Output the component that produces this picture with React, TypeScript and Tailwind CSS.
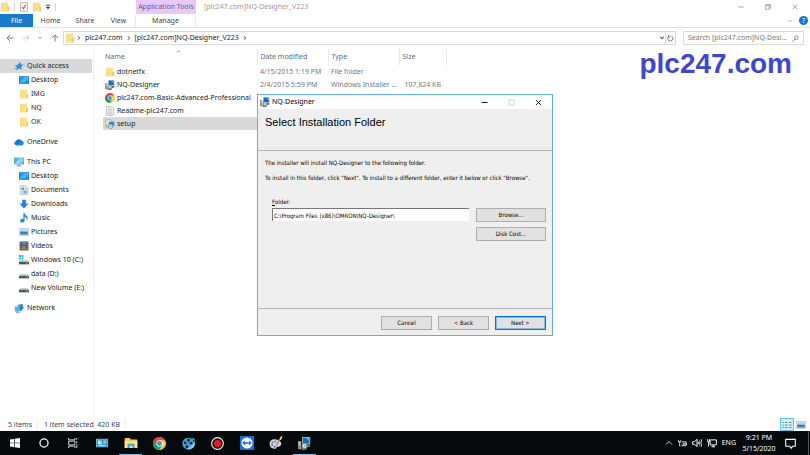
import type { ReactNode } from 'react'

type IconProps = { className?: string }

function Folder({ className = 'h-2.5 w-2.5' }: IconProps) {
  return (
    <svg viewBox="0 0 16 16" className={className} aria-hidden="true">
      <path d="M2 1h11v12l-1 2H2z" fill="#fbe08a" />
      <path d="M12 8h2.500v7H12z" fill="#f0c75a" />
      <path d="M2 1h1.500v14H2z" fill="#f8d676" />
    </svg>
  )
}

function Screen({ className = 'h-2.5 w-2.5' }: IconProps) {
  return (
    <svg viewBox="0 0 16 16" className={className} aria-hidden="true">
      <path d="M0 2h16v12H0z" fill="#1274c9" />
      <path d="M1 3h14v9H1z" fill="#1e9df0" />
      <path d="M1 12L10 3h5v3l-6 6z" fill="#49b6fa" />
    </svg>
  )
}

function Computer() {
  return (
    <svg viewBox="0 0 16 16" className="h-2.5 w-2.5" aria-hidden="true">
      <path d="M0 1h16v11H0z" fill="#7d97a8" />
      <path d="M1 2h14v9H1z" fill="#45b8f2" />
      <path d="M1 11l8-9h6v4l-5 5z" fill="#8bd8fb" />
      <path d="M6 12h4v2h2v1H4v-1h2z" fill="#8b9aa4" />
    </svg>
  )
}

function Star() {
  return (
    <svg viewBox="0 0 16 16" className="h-2.5 w-2.5" aria-hidden="true">
      <path d="M10 1l1 4.500 4.500.5-4 3 1.500 5-4.500-2.500L3 15l2-5L1 7l5-1z" fill="#2f8fdd" />
      <path d="M4 10l-3.500 4" stroke="#5aa8e8" strokeWidth="1.500" />
    </svg>
  )
}

function Cloud() {
  return (
    <svg viewBox="0 0 16 16" className="h-2.5 w-2.5" aria-hidden="true">
      <path d="M3.500 13a3.200 3.200 0 01-.5-6.300A5 5 0 0112 6a3.600 3.600 0 011 7z" fill="#0f74cf" />
      <path d="M3 13l8-6 4 2.500a3 3 0 01-2 3.500z" fill="#1490df" />
    </svg>
  )
}

function Page({ className = 'h-2.5 w-2.5' }: IconProps) {
  return (
    <svg viewBox="0 0 16 16" className={className} aria-hidden="true">
      <path d="M2.500 1h8l3 3v11h-11z" fill="#f0f1f2" stroke="#a4a8ab" />
      <path d="M5 5h6M5 7.500h6M5 10h6M5 12.500h6" stroke="#aab0b4" />
    </svg>
  )
}

function Documents() {
  return (
    <svg viewBox="0 0 16 16" className="h-2.5 w-2.5" aria-hidden="true">
      <path d="M2 1h9l3 3v11H2z" fill="#e8eff4" stroke="#97a6b0" />
      <path d="M4 4h4v4H4z" fill="#4ba2dd" />
      <path d="M9 6h3M5 10h7M5 12.500h7" stroke="#6d8ba1" />
      <path d="M8 9h4v4H8z" fill="#73a8ce" />
    </svg>
  )
}

function Download() {
  return (
    <svg viewBox="0 0 16 16" className="h-2.5 w-2.5" aria-hidden="true">
      <path d="M5 1h6v6h4.500L8 15 .5 7H5z" fill="#2b83d6" />
    </svg>
  )
}

function Music() {
  return (
    <svg viewBox="0 0 16 16" className="h-2.5 w-2.5" aria-hidden="true">
      <path d="M7 0h2c0 4 5 4 5 8 0 2-1 3-2 4 1-3 0-5-3-6v6a3.500 3 0 11-2-2.500z" fill="#1e90e0" />
    </svg>
  )
}

function Pictures({ className = 'h-2.5 w-2.5' }: IconProps) {
  return (
    <svg viewBox="0 0 16 16" className={className} aria-hidden="true">
      <path d="M.5 2.500h15v11H.5z" fill="#f5f8fa" stroke="#a0adb6" />
      <path d="M2 4h12v8H2z" fill="#a8d5ef" />
      <path d="M2 8c4-2 7 1 12-1v5H2z" fill="#3d7fae" />
    </svg>
  )
}

function Videos() {
  return (
    <svg viewBox="0 0 16 16" className="h-2.5 w-2.5" aria-hidden="true">
      <path d="M1 1h14v14H1z" fill="#3c3f48" />
      <path d="M4 1h8v6H4z" fill="#5f83b5" />
      <path d="M4 8h8v7H4z" fill="#a3794c" />
      <path d="M2.500 2v13M13.500 2v13" stroke="#d8d8d8" strokeDasharray="1.500 1.500" />
    </svg>
  )
}

function Drive({ system = false }: { system?: boolean }) {
  return (
    <svg viewBox="0 0 16 16" className="h-2.5 w-2.5" aria-hidden="true">
      {system && <path d="M0 0h3v3H0zM4 0h3v3H4zM0 4h3v3H0zM4 4h3v3H4z" fill="#22aee8" />}
      <path d="M2 8h12l2 3H0z" fill="#c6cacc" />
      <path d="M0 11h16v4H0z" fill="#4f5659" />
      <path d="M11 13h3" stroke="#63db73" strokeWidth="1.500" />
    </svg>
  )
}

function Network() {
  return (
    <svg viewBox="0 0 16 16" className="h-2.5 w-2.5" aria-hidden="true">
      <path d="M5 3l9-2 1.500 8-5 3z" fill="#4c9ed0" />
      <path d="M1 6l9-1v8l-8 1z" fill="#4bb3ef" />
      <path d="M3 14h7v1.500H3z" fill="#6a94ae" />
      <path d="M10 5l3-2v8l-3 2z" fill="#2677ae" />
    </svg>
  )
}

function Installer({ className = 'h-2.5 w-2.5' }: IconProps) {
  return (
    <svg viewBox="0 0 16 16" className={className} aria-hidden="true">
      <path d="M5 0h10v9H5z" fill="#b8c3ca" />
      <path d="M6 1h8v7H6z" fill="#1269b8" />
      <path d="M9 1l5 4V1z" fill="#57b5ea" />
      <path d="M0 5h4v10H0z" fill="#8b9295" />
      <path d="M1 7h2M1 9h2" stroke="#fff" />
      <path d="M5 9h10v3l-4 1-1 3H4z" fill="#68716f" />
      <circle cx="8" cy="11" r="3.200" fill="#e3e8e8" stroke="#596769" />
      <circle cx="8" cy="11" r="1" fill="#478b78" />
    </svg>
  )
}

function Setup() {
  return (
    <svg viewBox="0 0 16 16" className="h-2.5 w-2.5" aria-hidden="true">
      <path d="M1 1h8l3 3v9H1z" fill="#dce8f0" stroke="#8b9faf" />
      <path d="M6 4h9v8H6z" fill="#8298a5" />
      <path d="M7 5h7v5H7z" fill="#3389d0" />
      <path d="M3 8l4 3-3 3-3-3z" fill="#e9bd3e" />
      <circle cx="9" cy="12" r="3.500" fill="#dce9ec" stroke="#587f9d" />
      <circle cx="9" cy="12" r="1" fill="#327bbc" />
    </svg>
  )
}

function Chrome({ className = 'h-2.5 w-2.5' }: IconProps) {
  return (
    <svg viewBox="0 0 24 24" className={className} aria-hidden="true">
      <circle cx="12" cy="12" r="12" fill="#ffcd42" />
      <path d="M1.600 6A12 12 0 0012 24l5-9-5-3z" fill="#17a15f" />
      <path d="M1.600 6L7 15l5-9h10.400A12 12 0 001.600 6z" fill="#e34435" />
      <circle cx="12" cy="12" r="5.800" fill="#fff" />
      <circle cx="12" cy="12" r="4.600" fill="#4a8af4" />
    </svg>
  )
}

function Line({ d, className = 'h-2 w-2', width = 1.5 }: { d: string; className?: string; width?: number }) {
  return (
    <svg viewBox="0 0 16 16" className={className} fill="none" stroke="currentColor" strokeWidth={width} aria-hidden="true">
      <path d={d} />
    </svg>
  )
}

const CHEVRON_RIGHT = 'M5 3l5 5-5 5'
const CHEVRON_DOWN = 'M3 5l5 5 5-5'
const CHEVRON_UP = 'M2 11l6-6 6 6'
const CLOSE = 'M2 2l12 12M14 2L2 14'

type TreeItem = { label: string; icon: ReactNode }

const tree: { root: TreeItem; selected?: boolean; children: TreeItem[] }[] = [
  {
    root: { label: 'Quick access', icon: <Star /> },
    selected: true,
    children: [
      { label: 'Desktop', icon: <Screen /> },
      { label: 'IMG', icon: <Folder /> },
      { label: 'NQ', icon: <Folder /> },
      { label: 'OK', icon: <Folder /> },
    ],
  },
  { root: { label: 'OneDrive', icon: <Cloud /> }, children: [] },
  {
    root: { label: 'This PC', icon: <Computer /> },
    children: [
      { label: 'Desktop', icon: <Screen /> },
      { label: 'Documents', icon: <Documents /> },
      { label: 'Downloads', icon: <Download /> },
      { label: 'Music', icon: <Music /> },
      { label: 'Pictures', icon: <Pictures /> },
      { label: 'Videos', icon: <Videos /> },
      { label: 'Windows 10 (C:)', icon: <Drive system /> },
      { label: 'data (D:)', icon: <Drive /> },
      { label: 'New Volume (E:)', icon: <Drive /> },
    ],
  },
  { root: { label: 'Network', icon: <Network /> }, children: [] },
]

const files = [
  { name: 'dotnetfx', icon: <Folder />, date: '4/15/2015 1:19 PM', type: 'File folder', size: '' },
  { name: 'NQ-Designer', icon: <Installer />, date: '2/4/2015 5:59 PM', type: 'Windows Installer ...', size: '107,824 KB' },
  { name: 'plc247.com-Basic-Advanced-Professional', icon: <Chrome />, date: '', type: '', size: '' },
  { name: 'Readme-plc247.com', icon: <Page />, date: '', type: '', size: '' },
  { name: 'setup', icon: <Setup />, date: '', type: '', size: '', selected: true },
]

function TitleBar() {
  return (
    <header className="flex h-3.5 items-center justify-between">
      <div className="flex h-full items-center">
        <div className="flex w-34 items-center gap-[3px]">
          <Folder />
          <span className="mx-px h-2 w-px bg-gray-300" />
          <button aria-label="Properties">
            <svg viewBox="0 0 16 16" className="h-2.5 w-2.5" aria-hidden="true">
              <path d="M2.500 1h11v14h-11z" fill="#fff" stroke="#8b8b8b" />
              <path d="M5 8l2 3 4-7" fill="none" stroke="#e4572e" strokeWidth="2" />
            </svg>
          </button>
          <button aria-label="New folder"><Folder /></button>
          <button aria-label="Customize toolbar">
            <svg viewBox="0 0 8 8" className="h-1.5 w-1.5" aria-hidden="true">
              <path d="M1 1h6v1H1zM1 3.500h6L4 7z" fill="#333" />
            </svg>
          </button>
          <span className="mx-px h-2 w-px bg-gray-300" />
        </div>
        <div className="flex h-full w-15 items-center justify-center bg-[#e9c9fc] text-[#6b5679]">Application Tools</div>
        <h1 className="ml-2 text-[#999]">[plc247.com]NQ-Designer_V223</h1>
      </div>
      <div className="flex items-center gap-[21px] pr-3 text-[#8d8d8d]">
        <button aria-label="Minimize"><Line d="M1 8h14" className="h-1.5 w-1.5" width={2} /></button>
        <button aria-label="Restore"><Line d="M1 4h10v10H1zM4 4V1h11v10h-4" className="h-1.5 w-1.5" width={2} /></button>
        <button aria-label="Close"><Line d={CLOSE} className="h-1.5 w-1.5" width={2} /></button>
      </div>
    </header>
  )
}

function Ribbon() {
  return (
    <nav className="flex items-stretch justify-between border-b border-[#e2e2e2] text-[#444]">
      <div className="flex h-[13px] text-center">
        <button className="w-[33px] bg-[#1979ca] text-white">File</button>
        <button className="w-[35px]">Home</button>
        <button className="w-[34px]">Share</button>
        <button className="w-[33px]">View</button>
        <button className="w-[61px] border-x border-[#eee6f3]">Manage</button>
      </div>
      <div className="flex items-center gap-1.5 pr-0.5 text-[#999]">
        <button aria-label="Expand ribbon"><Line d={CHEVRON_DOWN} className="h-1.5 w-1.5" width={2} /></button>
        <button aria-label="Help" className="flex h-[9px] w-[9px] items-center justify-center rounded-full bg-[#0b78d4] text-white">?</button>
      </div>
    </nav>
  )
}

function AddressBar() {
  return (
    <div className="flex items-center px-1.5 py-[3px]">
      <div className="flex w-[57px] items-center justify-between pr-1 text-[#777]">
        <button aria-label="Back"><Line d="M15 8H2M8 2L2 8l6 6" width={2} /></button>
        <button aria-label="Forward" className="text-[#d0d0d0]"><Line d="M1 8h13M8 2l6 6-6 6" width={2} /></button>
        <button aria-label="Recent locations"><Line d={CHEVRON_DOWN} className="h-1.5 w-1.5" width={2} /></button>
        <button aria-label="Up"><Line d="M8 15V2M2 8l6-6 6 6" width={2} /></button>
      </div>
      <div className="flex h-3.5 grow items-center border border-[#d9d9d9] pl-px">
        <Folder />
        <div className="ml-px flex grow items-center gap-[3px] text-[#222]">
          <Line d={CHEVRON_RIGHT} className="h-1.5 w-1.5" width={2} />
          <a href="#plc247">plc247.com</a>
          <Line d={CHEVRON_RIGHT} className="h-1.5 w-1.5" width={2} />
          <a href="#designer">[plc247.com]NQ-Designer_V223</a>
          <Line d={CHEVRON_RIGHT} className="h-1.5 w-1.5" width={2} />
        </div>
        <button aria-label="Previous locations" className="text-[#666]"><Line d={CHEVRON_DOWN} className="h-1.5 w-1.5" width={3} /></button>
        <button aria-label="Refresh" className="flex h-full items-center border-l border-[#d9d9d9] px-px text-[#666]">
          <Line d="M4 3a6 6 0 107 0M4 0v4h4" className="h-[7px] w-[7px]" width={2} />
        </button>
      </div>
      <label className="ml-[7px] flex h-3.5 w-[121px] items-center border border-[#d9d9d9] px-1 text-[#777]">
        <input aria-label="Search" placeholder="Search [plc247.com]NQ-Desi..." className="w-full min-w-0 outline-none placeholder:text-[#777]" />
        <Line d="M1 15l6-6M6 6a4 4 0 108 0 4 4 0 10-8 0" className="h-[7px] w-[7px] shrink-0" width={2} />
      </label>
    </div>
  )
}

function TreeRow({ item, nested, selected }: { item: TreeItem; nested?: boolean; selected?: boolean }) {
  return (
    <a
      href="#folder"
      className={`flex h-3.5 items-center text-[#222] ${nested ? 'gap-0.5 pl-[19px]' : 'gap-[3px] pl-3.5'} ${selected ? 'bg-[#d9d9d9]' : ''}`}
    >
      {item.icon}
      {item.label}
    </a>
  )
}

function Sidebar() {
  return (
    <aside className="flex w-[94px] shrink-0 flex-col gap-1.5 border-r border-[#f0f0f0] pt-[11px] pr-px">
      {tree.map((group) => (
        <div key={group.root.label}>
          <TreeRow item={group.root} selected={group.selected} />
          {group.children.map((c) => <TreeRow key={c.label} item={c} nested />)}
        </div>
      ))}
    </aside>
  )
}

function FileTable() {
  return (
    <table className="mt-px ml-[9px] table-fixed self-start text-left">
      <thead>
        <tr className="h-4 text-[#5c6b82] [&>th]:border-r [&>th]:border-[#e8e8e8] [&>th]:font-normal">
          <th className="relative w-[154px] pl-0.5">
            Name
            <Line d={CHEVRON_UP} className="absolute top-0 left-[73px] h-[5px] w-[5px]" width={2} />
          </th>
          <th className="w-[71px] pl-[3px]">Date modified</th>
          <th className="w-[71px] pl-[3px]">Type</th>
          <th className="w-[47px] pl-[3px]">Size</th>
        </tr>
      </thead>
      <tbody>
        {files.map((f) => (
          <tr key={f.name} className={`h-[13px] whitespace-nowrap text-[#777] ${f.selected ? 'bg-[#d9d9d9]' : ''}`}>
            <td className="pl-0.5 text-[#222]">
              <a href="#file" className="flex items-center gap-0.5">
                {f.icon}
                {f.name}
              </a>
            </td>
            <td className="pl-[3px]">{f.date}</td>
            <td className="pl-[3px]">{f.type}</td>
            <td className="pr-[5px] text-right">{f.size}</td>
          </tr>
        ))}
      </tbody>
    </table>
  )
}

const dialogButton = 'h-3.5 border border-[#adadad] bg-[#e1e1e1]'

function InstallDialog() {
  return (
    <section
      role="dialog"
      aria-label="NQ-Designer"
      className="absolute top-[94px] left-[257px] flex w-[296px] flex-col border border-[#64ade8] bg-[#efefef] font-['DejaVu_Sans_Condensed','Liberation_Sans',sans-serif] text-[6px] text-black"
    >
      <div className="flex h-3.5 items-center justify-between bg-white pr-2.5 pl-0.5 font-['Noto_Sans',sans-serif] text-[7px]">
        <div className="flex items-center gap-0.5"><Installer />NQ-Designer</div>
        <div className="flex gap-5">
          <button aria-label="Minimize"><Line d="M1 8h14" className="h-[7px] w-[7px]" width={2} /></button>
          <button aria-label="Maximize" disabled className="text-[#d0d0d0]"><Line d="M2 2h12v12H2z" className="h-[7px] w-[7px]" width={2} /></button>
          <button aria-label="Close"><Line d={CLOSE} className="h-[7px] w-[7px]" width={2} /></button>
        </div>
      </div>
      <div className="border-b border-[#b5b5b5] px-[7px] pt-[7px] pb-[22px]">
        <h2 className="font-['Liberation_Sans',sans-serif] text-[11px] leading-3">Select Installation Folder</h2>
      </div>
      <div className="px-[7px] pt-2 pb-[67px]">
        <p className="leading-2">The installer will install NQ-Designer to the following folder.</p>
        <p className="mt-[7px] leading-2 whitespace-nowrap">To install in this folder, click "Next". To install to a different folder, enter it below or click "Browse".</p>
        <div className="mt-4 ml-[7px]">
          <label htmlFor="folder" className="block leading-2"><u>F</u>older:</label>
          <div className="mt-0.5 flex items-start gap-[7px]">
            <input
              id="folder"
              defaultValue="C:\Program Files (x86)\OMRON\NQ-Designer\"
              className="h-[13px] min-w-0 grow border-t border-l border-t-[#777] border-l-[#777] bg-white px-px outline-none"
            />
            <div className="-mr-px flex w-[70px] flex-col gap-[5px]">
              <button className={dialogButton}>Browse...</button>
              <button className={dialogButton}>Disk Cost...</button>
            </div>
          </div>
        </div>
      </div>
      <div className="flex justify-end gap-1.5 border-t border-[#b5b5b5] px-1.5 pt-[7px] pb-[5px]">
        <button className={`w-[51px] ${dialogButton}`}>Cancel</button>
        <button className={`w-[51px] ${dialogButton}`}>&lt; Back</button>
        <button className="h-3.5 w-[51px] border border-[#0078d7] bg-[#e1e1e1] ring-1 ring-[#0078d7]/40 ring-inset">Next &gt;</button>
      </div>
    </section>
  )
}

function StatusBar() {
  return (
    <footer className="flex h-[13px] items-center justify-between pr-1 pl-2 text-[#334766]">
      <div className="flex gap-1.5">
        <span className="border-r border-[#eee] pr-[5px]">5 items</span>
        <span className="border-r border-[#eee] pr-[5px]">1 item selected&nbsp; 420 KB</span>
      </div>
      <div className="flex items-center gap-0.5">
        <button aria-label="Details view" className="flex h-[13px] w-3.5 items-center justify-center border border-[#5fc0ea] bg-[#d3eefb]">
          <svg viewBox="0 0 20 16" className="h-2 w-2.5" stroke="#6d8ba0" strokeWidth="2" aria-hidden="true">
            <path d="M1 3h3M6 3h5M14 3h5M1 8h3M6 8h5M14 8h5M1 13h3M6 13h5M14 13h5" />
          </svg>
        </button>
        <button aria-label="Thumbnail view"><Pictures /></button>
      </div>
    </footer>
  )
}

const apps: { label: string; icon: ReactNode; active?: boolean }[] = [
  {
    label: 'Start',
    icon: <svg viewBox="0 0 16 16" className="h-2.5 w-2.5"><path d="M0 2.300l6.500-.9v6.100H0zM7.500 1.200L16 0v7.500H7.500zM0 8.500h6.500v6.100L0 13.700zM7.500 8.500H16V16l-8.500-1.200z" fill="#fff" /></svg>,
  },
  {
    label: 'Cortana',
    icon: <svg viewBox="0 0 16 16" className="h-2.5 w-2.5"><circle cx="8" cy="8" r="6.500" fill="none" stroke="#fff" strokeWidth="2" /></svg>,
  },
  {
    label: 'Task view',
    icon: (
      <svg viewBox="0 0 16 16" className="h-2.5 w-2.5" fill="none" stroke="#ddd" strokeWidth="1.500">
        <path d="M1 0v3h10V0M1 5h10v6H1zM1 16v-3h10v3M14 0v3M14 5v3M14 10v6" />
      </svg>
    ),
  },
  {
    label: 'Control Panel',
    icon: (
      <svg viewBox="0 0 20 16" className="h-2.5 w-3">
        <path d="M0 1h20v14H0z" fill="#8cd4f5" />
        <path d="M1 2h18v12H1z" fill="#2793d5" />
        <circle cx="6.500" cy="7" r="3.500" fill="#d9f0fb" />
        <path d="M6.500 7V3.500A3.500 3.500 0 0110 7z" fill="#f39b28" />
        <path d="M12 5h5M12 8h5M4 12h12" stroke="#e2f4fd" strokeWidth="1.500" />
      </svg>
    ),
  },
  {
    label: 'File Explorer',
    active: true,
    icon: (
      <svg viewBox="0 0 20 16" className="h-3 w-3.5">
        <path d="M1 1h7l2 2h9v12H1z" fill="#f4c64e" />
        <path d="M1 5h18v10H1z" fill="#fee48a" />
        <path d="M5 15V9h10v6h-3v-3H8v3z" fill="#35a4df" />
      </svg>
    ),
  },
  { label: 'Chrome', icon: <Chrome className="h-[13px] w-[13px]" /> },
  {
    label: 'Video player',
    icon: (
      <svg viewBox="0 0 20 20" className="h-[13px] w-[13px]">
        <circle cx="9.500" cy="10" r="9" fill="#4aa0d0" />
        <path d="M14 2c6-1 7 3 3 8s-5 7-10 9c6 1 13-2 13-9 0-3-2-6-6-8z" fill="#8ccdec" />
        <circle cx="10" cy="5" r="2.200" fill="#0a2438" />
        <circle cx="4.800" cy="9" r="2.100" fill="#0a2438" />
        <circle cx="14" cy="9.500" r="2.200" fill="#0a2438" />
        <circle cx="7.500" cy="15" r="2.200" fill="#0a2438" />
      </svg>
    ),
  },
  {
    label: 'Recorder',
    icon: (
      <svg viewBox="0 0 20 20" className="h-[13px] w-[13px]">
        <circle cx="10" cy="10" r="9" fill="#111" stroke="#eee" strokeWidth="1.800" />
        <circle cx="10" cy="10" r="5.500" fill="#f01818" />
      </svg>
    ),
  },
  {
    label: 'TeamViewer',
    icon: (
      <svg viewBox="0 0 20 20" className="h-3.5 w-3.5">
        <path d="M0 0h20v20H0z" fill="#1470d8" />
        <circle cx="10" cy="10" r="8" fill="#fff" />
        <path d="M3 10l4-3.500V9h6V6.500l4 3.500-4 3.500V11H7v2.500z" fill="#1470d8" />
      </svg>
    ),
  },
  {
    label: 'Paint',
    icon: (
      <svg viewBox="0 0 20 20" className="h-3.5 w-3.5">
        <path d="M1 12C0 7 5 4 10 5s9 4 7 8-5 1-6 3-2 3-5 2-5-3-5-6z" fill="#c5d8e4" />
        <circle cx="5" cy="9" r="1.600" fill="#e25441" />
        <circle cx="9" cy="8" r="1.500" fill="#5eae4b" />
        <circle cx="4.500" cy="13" r="1.600" fill="#3a86ca" />
        <circle cx="8" cy="15.500" r="1.500" fill="#8b58b4" />
        <path d="M10 14l6-10" stroke="#c97a31" strokeWidth="1.800" />
        <path d="M15 5l2-5 2 1-2 5z" fill="#f3d9a5" />
      </svg>
    ),
  },
  { label: 'NQ-Designer', icon: <Installer className="h-[13px] w-[13px]" />, active: true },
]

function Taskbar() {
  return (
    <footer className="flex h-6 items-stretch justify-between bg-[#070a0d] text-white">
      <div className="flex">
        {apps.map((a) => (
          <button
            key={a.label}
            aria-label={a.label}
            className="relative flex w-[29px] items-center justify-center"
          >
            {a.icon}
            {a.active && <span className="absolute inset-x-[3px] bottom-0 h-px bg-[#76b9ed]" />}
          </button>
        ))}
      </div>
      <div className="flex items-center gap-[5px]">
        <button aria-label="Hidden icons"><Line d={CHEVRON_UP} /></button>
        <Line d="M1 2v3h4V2M3 5v8M7 5h7v7H6M14 7h2v3h-2M8 7l4 4M12 7l-4 4" className="h-[9px] w-[9px]" />
        <Line d="M1 6h3l4-4v12l-4-4H1zM10 6v4M12 4c1 2 1 6 0 8M14.500 2c2 3 2 9 0 12" className="h-2.5 w-2.5" />
        <Line d="M5 3h10v8H5zM10 11v3M7 14h6M1 2v4h3V2M2.500 6v8" className="h-2.5 w-2.5" />
        <span>ENG</span>
        <div className="w-9 text-center leading-[11px]">
          <p>9:21 PM</p>
          <p>5/15/2020</p>
        </div>
        <button aria-label="Notifications" className="mx-[3px]"><Line d="M1 2h14v10h-4l-2 3-2-3H1z" className="h-[11px] w-[11px]" /></button>
        <span className="mr-px ml-1 h-full w-px bg-[#555]" />
      </div>
    </footer>
  )
}

export default function App() {
  return (
    <div className="relative flex min-h-screen flex-col bg-white font-['Noto_Sans',sans-serif] text-[7px] leading-[10px]">
      <TitleBar />
      <Ribbon />
      <AddressBar />
      <main className="flex grow">
        <Sidebar />
        <FileTable />
      </main>
      <StatusBar />
      <Taskbar />
      <div className="absolute top-12 right-[18px] font-['Liberation_Sans',sans-serif] text-[28px] leading-8 font-bold text-[#3f48cc]">plc247.com</div>
      <InstallDialog />
    </div>
  )
}
